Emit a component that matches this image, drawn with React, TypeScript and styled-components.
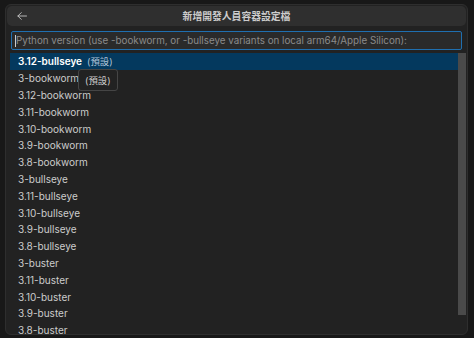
import styled, { createGlobalStyle } from "styled-components";

const GlobalStyle = createGlobalStyle`
  html, body {
    margin: 0;
    padding: 0;
    background: #181818;
  }
  body {
    font-family: "Inter", "Noto Sans CJK TC", "Liberation Sans", sans-serif;
    overflow: hidden;
  }
`;

const options = [
  "3.12-bullseye",
  "3-bookworm",
  "3.12-bookworm",
  "3.11-bookworm",
  "3.10-bookworm",
  "3.9-bookworm",
  "3.8-bookworm",
  "3-bullseye",
  "3.11-bullseye",
  "3.10-bullseye",
  "3.9-bullseye",
  "3.8-bullseye",
  "3-buster",
  "3.11-buster",
  "3.10-buster",
  "3.9-buster",
  "3.8-buster",
];

const BackArrow = () => (
  <svg width="12" height="12" viewBox="0 0 16 16" fill="none">
    <path
      d="M14 8H2.5M7 3.5L2.5 8L7 12.5"
      stroke="#c5c5c5"
      strokeWidth="1.2"
      strokeLinecap="round"
      strokeLinejoin="round"
    />
  </svg>
);

export default function App() {
  return (
    <Page>
      <GlobalStyle />
      <Panel>
        <TitleBar>
          <BackButton>
            <BackArrow />
          </BackButton>
          <Title>新增開發人員容器設定檔</Title>
        </TitleBar>
        <InputRow>
          <Input>
            <Caret />
            <Placeholder>
              Python version (use -bookworm, or -bullseye variants on local arm64/Apple Silicon):
            </Placeholder>
          </Input>
        </InputRow>
        <ListArea>
          <List>
            {options.map((label, i) => (
              <Row key={label} selected={i === 0}>
                <Label selected={i === 0}>{label}</Label>
                {i === 0 && <Description>(預設)</Description>}
                {i === 1 && <Tooltip>(預設)</Tooltip>}
              </Row>
            ))}
          </List>
          <Scrollbar>
            <Thumb />
          </Scrollbar>
        </ListArea>
      </Panel>
    </Page>
  );
}

const Page = styled.div`
  width: 474px;
  height: 338px;
  padding: 4px 6px 0 5px;
  box-sizing: border-box;
  background: #181818;
`;

const Panel = styled.div`
  height: 329px;
  background: #222222;
  border: 1px solid #2e2e2e;
  border-radius: 6px;
  overflow: hidden;
  display: flex;
  flex-direction: column;
`;

const TitleBar = styled.div`
  height: 20px;
  margin: 1px 1px 0;
  background: #2f2f2f;
  border-radius: 5px;
  display: flex;
  align-items: center;
  position: relative;
`;

const BackButton = styled.div`
  width: 20px;
  display: flex;
  justify-content: center;
  margin-left: 5px;
`;

const Title = styled.div`
  position: absolute;
  left: 0;
  right: 0;
  text-align: center;
  font-size: 9.8px;
  font-weight: 600;
  color: #cccccc;
  pointer-events: none;
`;

const InputRow = styled.div`
  padding: 5px 5px 3px 5px;
`;

const Input = styled.div`
  height: 17px;
  border: 1px solid #1f6fb0;
  border-radius: 2px;
  background: #2a2a2a;
  display: flex;
  align-items: center;
  padding-left: 3px;
  overflow: hidden;
`;

const Caret = styled.div`
  width: 1px;
  height: 12px;
  background: #cccccc;
`;

const Placeholder = styled.span`
  font-size: 9.8px;
  color: #8b8b8b;
  white-space: nowrap;
`;

const ListArea = styled.div`
  flex: 1;
  display: flex;
  position: relative;
  overflow: hidden;
`;

const List = styled.div`
  flex: 1;
  padding-left: 4px;
`;

const Row = styled.div<{ selected?: boolean }>`
  height: 16.8px;
  display: flex;
  align-items: center;
  padding-left: 8px;
  background: ${(p) => (p.selected ? "#04395e" : "transparent")};
  position: relative;
`;

const Label = styled.span<{ selected?: boolean }>`
  font-size: 10px;
  color: ${(p) => (p.selected ? "#ffffff" : "#cccccc")};
  font-weight: ${(p) => (p.selected ? 600 : 400)};
  white-space: nowrap;
`;

const Description = styled.span`
  font-size: 9.4px;
  color: #b0c4d8;
  margin-left: 5px;
`;

const Tooltip = styled.div`
  position: absolute;
  left: 68px;
  top: -1px;
  padding: 3px 6px;
  font-size: 9.4px;
  color: #cccccc;
  background: #222222;
  border: 1px solid #454545;
  border-radius: 3px;
`;

const Scrollbar = styled.div`
  width: 8px;
  margin-right: 1px;
`;

const Thumb = styled.div`
  height: 262px;
  background: #4a4a4a;
`;
